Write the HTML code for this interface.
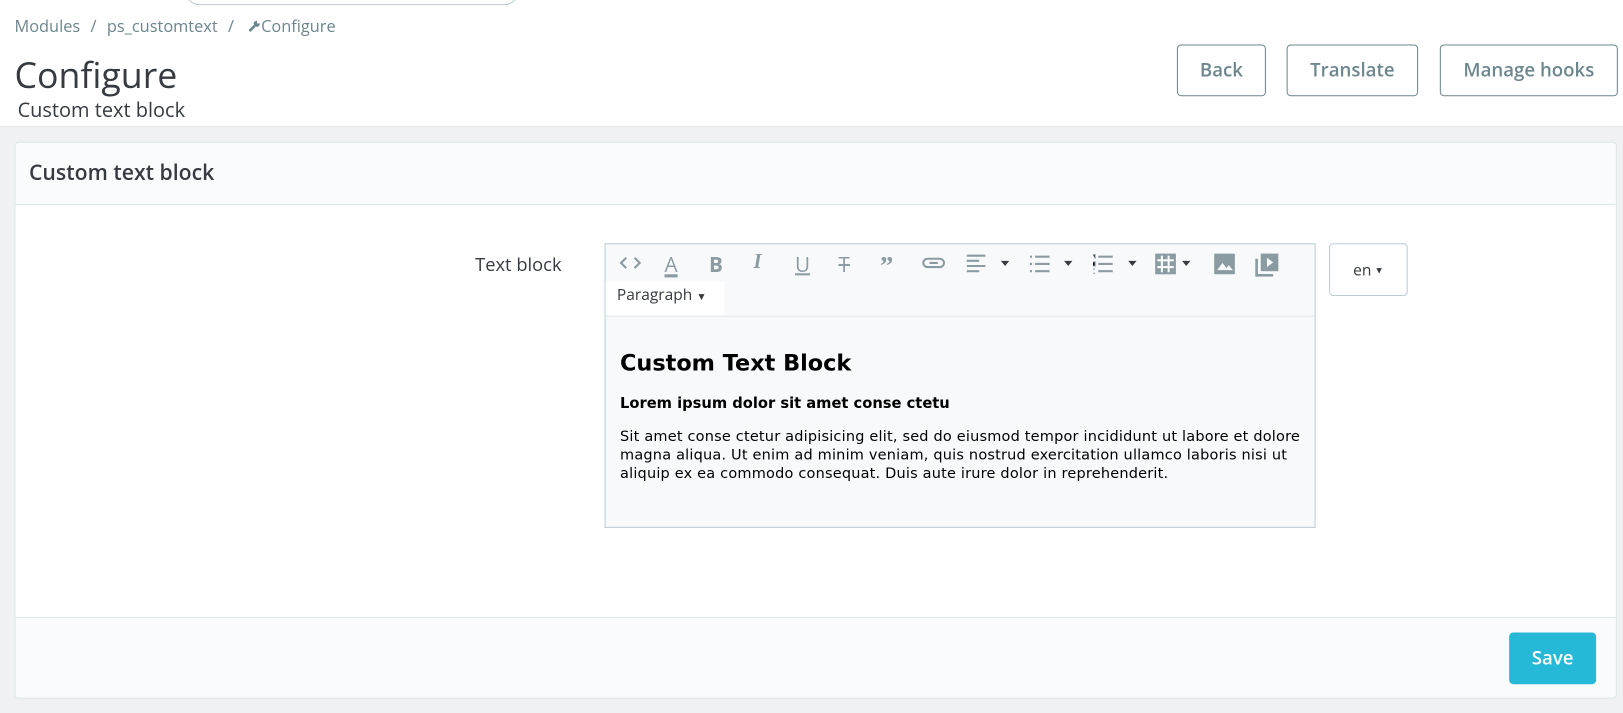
<!DOCTYPE html>
<html><head><meta charset="utf-8"><style>
*{box-sizing:border-box;margin:0;padding:0}
html,body{width:1623px;height:713px;background:#eff1f2;overflow:hidden}
body{font-family:"Open Sans","Liberation Sans",sans-serif;color:#363a41;position:relative}
.wrap{position:absolute;left:0;top:0;width:1568px;height:689px;transform:scale(1.0351);transform-origin:0 0}
.top{position:absolute;left:0;top:0;width:1568px;height:123px;background:#fff;border-bottom:1px solid #dfe3e6}
.search{position:absolute;left:180px;top:-20px;width:320px;height:25px;border:1px solid #bbcdd2;border-radius:14px}
.bc{position:absolute;left:14px;top:14px;font-size:15.8px;color:#6c868e}
.bc span{margin:0 10px}
h1{position:absolute;left:14px;top:49px;font-size:34.5px;font-weight:400;color:#363a41}
.sub{position:absolute;left:17px;top:92px;font-size:19.3px;color:#363a41}
.btn{position:absolute;top:43px;height:50px;border:1px solid #6c868e;border-radius:4px;color:#6c868e;font-size:18px;font-weight:600;display:flex;align-items:center;justify-content:center;background:#fff}
.card{position:absolute;left:14px;top:137px;width:1548px;height:538px;background:#fff;border:1px solid #dbe6e9;border-radius:4px;overflow:hidden}
.ch{height:60px;background:#fafbfc;border-bottom:1px solid #dbe6e9;padding:15px 13px;font-size:20.5px;font-weight:600}
.cf{position:absolute;left:0;bottom:0;width:100%;height:78px;background:#fafbfc;border-top:1px solid #dbe6e9}
.save{position:absolute;right:19px;top:14px;width:84px;height:50px;background:#25b9d7;color:#fff;font-weight:600;font-size:18px;border-radius:4px;display:flex;align-items:center;justify-content:center}
.lbl{position:absolute;left:459px;top:244px;font-size:17.7px}
.ed{position:absolute;left:584px;top:235px;width:687px;height:275px;border:1px solid #bbcdd2;background:#f8f9fa}
.tb{height:70px;border-bottom:1px solid #e5e9ec;position:relative}
.tb i{position:absolute;top:6px;font-style:normal;color:#8a9ba2;font-size:20px;font-weight:700}
.tb svg{position:absolute;top:8px}
.para{position:absolute;left:0;top:36px;width:115px;height:32px;background:#fff;font-size:15px;padding:3px 11px;color:#363a41}
.content{padding:30px 14px;font-family:"DejaVu Sans",sans-serif;color:#000}
.content h2{font-size:21.6px;margin:3px 0 18px}
.content h4{font-size:14.2px;margin-bottom:15px}
.content p{font-size:14px;line-height:18.2px;letter-spacing:0.19px}
.lang{position:absolute;left:1284px;top:235px;width:76px;height:51px;border:1px solid #bbcdd2;border-radius:4px;font-size:15px;display:flex;align-items:center;justify-content:center;color:#363a41}
.dd{position:absolute;top:16px;width:0;height:0;border-left:4px solid transparent;border-right:4px solid transparent;border-top:5px solid #363a41}
</style></head><body><div class="wrap">
<div class="top">
<div class="search"></div>
<div class="bc">Modules<span>/</span>ps_customtext<span>/</span>&nbsp;<svg width="12" height="12" viewBox="0 0 12 12"><path d="M1 11 L6 6" stroke="#6c868e" stroke-width="2.5"/><circle cx="8" cy="4" r="3" fill="#6c868e"/><circle cx="9.5" cy="2.5" r="1.3" fill="#fff"/></svg>Configure</div>
<h1>Configure</h1>
<div class="sub">Custom text block</div>
<div class="btn" style="left:1137px;width:86px">Back</div>
<div class="btn" style="left:1243px;width:127px">Translate</div>
<div class="btn" style="left:1391px;width:172px">Manage hooks</div>
</div>
<div class="card">
<div class="ch">Custom text block</div>
<div class="cf"><div class="save">Save</div></div>
</div>
<div class="lbl">Text block</div>
<div class="ed">
<div class="tb">
<svg style="left:12px" width="24" height="20" viewBox="0 0 24 20"><path d="M8 5 L3 10 L8 15 M16 5 L21 10 L16 15" stroke="#8a9ba2" stroke-width="2" fill="none"/></svg>
<i style="left:57px;font-weight:400;text-decoration:underline;text-decoration-thickness:3px">A</i>
<i style="left:100px">B</i>
<i style="left:143px;font-style:italic;font-family:'Liberation Serif',serif">I</i>
<i style="left:183px;font-weight:400;text-decoration:underline">U</i>
<i style="left:225px;font-weight:400;text-decoration:line-through">T</i>
<i style="left:265px;font-family:'Liberation Serif',serif;font-size:26px">”</i>
<svg style="left:305px" width="24" height="20" viewBox="0 0 24 20"><rect x="2" y="6" width="20" height="8" rx="4" stroke="#8a9ba2" stroke-width="2" fill="none"/><path d="M8 10 H16" stroke="#8a9ba2" stroke-width="2"/></svg>
<svg style="left:347px" width="22" height="22" viewBox="0 0 22 22"><path d="M2 3H20M2 8H14M2 13H20M2 18H14" stroke="#8a9ba2" stroke-width="2"/></svg><div class="dd" style="left:382px"></div>
<svg style="left:408px" width="22" height="22" viewBox="0 0 22 22"><path d="M2 4H4M7 4H21M2 11H4M7 11H21M2 18H4M7 18H21" stroke="#8a9ba2" stroke-width="2"/></svg><div class="dd" style="left:443px"></div>
<svg style="left:469px" width="22" height="22" viewBox="0 0 22 22"><path d="M7 4H21M7 11H21M7 18H21" stroke="#8a9ba2" stroke-width="2"/><path d="M2 2H4V6M2 9H4V13H2M2 16H4M2 20H4" stroke="#8a9ba2" stroke-width="1"/></svg><div class="dd" style="left:505px"></div>
<svg style="left:530px" width="22" height="22" viewBox="0 0 22 22"><rect x="1" y="1" width="20" height="20" fill="#8a9ba2"/><path d="M3 7.5H19M3 14H19M7.5 3V19M14 3V19" stroke="#f8f9fa" stroke-width="2"/></svg><div class="dd" style="left:557px"></div>
<svg style="left:587px" width="22" height="22" viewBox="0 0 22 22"><rect x="1" y="1" width="20" height="20" rx="1" fill="#8a9ba2"/><path d="M4 17 L9 10 L13 15 L15 12 L19 17Z" fill="#f8f9fa"/></svg>
<svg style="left:627px" width="24" height="24" viewBox="0 0 24 24"><rect x="6" y="1" width="17" height="17" fill="#8a9ba2"/><path d="M2 6V22H18" stroke="#8a9ba2" stroke-width="2.5" fill="none"/><path d="M12 5L18 9.5L12 14Z" fill="#f8f9fa"/></svg>
<div class="para">Paragraph <small style="font-size:10px">▼</small></div>
</div>
<div class="content">
<h2>Custom Text Block</h2>
<h4>Lorem ipsum dolor sit amet conse ctetu</h4>
<p>Sit amet conse ctetur adipisicing elit, sed do eiusmod tempor incididunt ut labore et dolore magna aliqua. Ut enim ad minim veniam, quis nostrud exercitation ullamco laboris nisi ut aliquip ex ea commodo consequat. Duis aute irure dolor in reprehenderit.</p>
</div>
</div>
<div class="lang">en <small style="font-size:9px;margin-left:3px">▼</small></div>
</div></body></html>
